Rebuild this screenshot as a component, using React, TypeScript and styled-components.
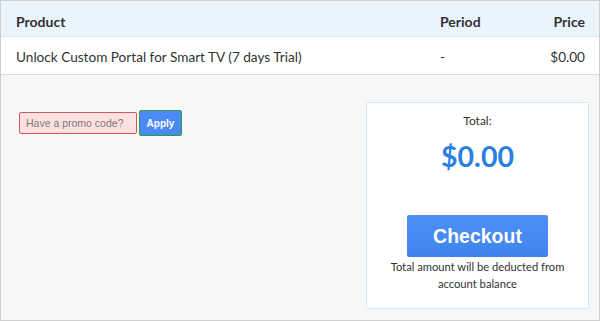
import styled, { createGlobalStyle } from "styled-components";

const GlobalStyle = createGlobalStyle`
  html, body {
    margin: 0;
    padding: 0;
    background: #ffffff;
  }
  * {
    box-sizing: border-box;
  }
`;

const Frame = styled.div`
  width: 600px;
  height: 321px;
  border: 1px solid #cfcfcf;
  background: #f7f7f7;
  display: flex;
  flex-direction: column;
  font-family: "Lato", "Liberation Sans", sans-serif;
  color: #333333;
`;

const Row = styled.div<{ $head?: boolean }>`
  display: grid;
  grid-template-columns: 1fr 92px 53px;
  align-items: center;
  padding: ${(p) => (p.$head ? "5px" : "3px")} 14px 0 15px;
  height: ${(p) => (p.$head ? "36px" : "38px")};
  background: ${(p) => (p.$head ? "#eaf4fd" : "#ffffff")};
  border-bottom: 1px solid ${(p) => (p.$head ? "#d7e8f8" : "#dcdcdc")};
  font-size: ${(p) => (p.$head ? "14px" : "13.6px")};
  font-weight: ${(p) => (p.$head ? 700 : 400)};
`;

const Cell = styled.div<{ $right?: boolean }>`
  text-align: ${(p) => (p.$right ? "right" : "left")};
  white-space: nowrap;
`;

const Body = styled.div`
  flex: 1;
  display: flex;
  justify-content: space-between;
  align-items: flex-start;
  padding: 27px 10px 11px 18px;
`;

const PromoForm = styled.form`
  display: flex;
  align-items: center;
  gap: 2px;
  margin-top: 8px;
`;

const PromoInput = styled.input`
  width: 118px;
  height: 22px;
  padding: 0 6px;
  border: 1px solid #cf5a5a;
  border-radius: 2px;
  background: #fde0e0;
  font-family: "Liberation Sans", Arial, sans-serif;
  font-size: 10.5px;
  color: #555555;
  outline: none;
  &::placeholder {
    color: #7a7a7a;
  }
`;

const ApplyButton = styled.button`
  height: 26px;
  width: 43px;
  padding: 0;
  border: 1px solid #2f9d48;
  border-radius: 2px;
  background: #4a8af4;
  color: #ffffff;
  font-family: "Liberation Sans", Arial, sans-serif;
  font-size: 10px;
  font-weight: 700;
`;

const TotalCard = styled.div`
  width: 223px;
  height: 207px;
  background: #ffffff;
  border: 1px solid #d8e8f9;
  border-radius: 2px;
  display: flex;
  flex-direction: column;
  align-items: center;
  padding-top: 9px;
`;

const TotalLabel = styled.div`
  font-size: 12px;
  line-height: 17px;
`;

const Amount = styled.div`
  margin-top: 10px;
  font-size: 28.5px;
  line-height: 34px;
  font-weight: 700;
  color: #2a7fe1;
`;

const CheckoutButton = styled.button`
  margin-top: 42px;
  width: 141px;
  height: 42px;
  border: none;
  border-radius: 2px;
  background: linear-gradient(#4d91f6, #3f83ee);
  color: #ffffff;
  font-family: "Liberation Sans", Arial, sans-serif;
  font-size: 19.5px;
  font-weight: 700;
`;

const Note = styled.p`
  margin: 1px 0 0;
  font-size: 11.2px;
  line-height: 17px;
  text-align: center;
  width: 200px;
`;

export default function App() {
  return (
    <>
      <GlobalStyle />
      <Frame>
        <Row $head>
          <Cell>Product</Cell>
          <Cell>Period</Cell>
          <Cell $right>Price</Cell>
        </Row>
        <Row>
          <Cell>Unlock Custom Portal for Smart TV (7 days Trial)</Cell>
          <Cell>-</Cell>
          <Cell $right>$0.00</Cell>
        </Row>
        <Body>
          <PromoForm onSubmit={(e) => e.preventDefault()}>
            <PromoInput placeholder="Have a promo code?" />
            <ApplyButton type="submit">Apply</ApplyButton>
          </PromoForm>
          <TotalCard>
            <TotalLabel>Total:</TotalLabel>
            <Amount>$0.00</Amount>
            <CheckoutButton>Checkout</CheckoutButton>
            <Note>Total amount will be deducted from account balance</Note>
          </TotalCard>
        </Body>
      </Frame>
    </>
  );
}
